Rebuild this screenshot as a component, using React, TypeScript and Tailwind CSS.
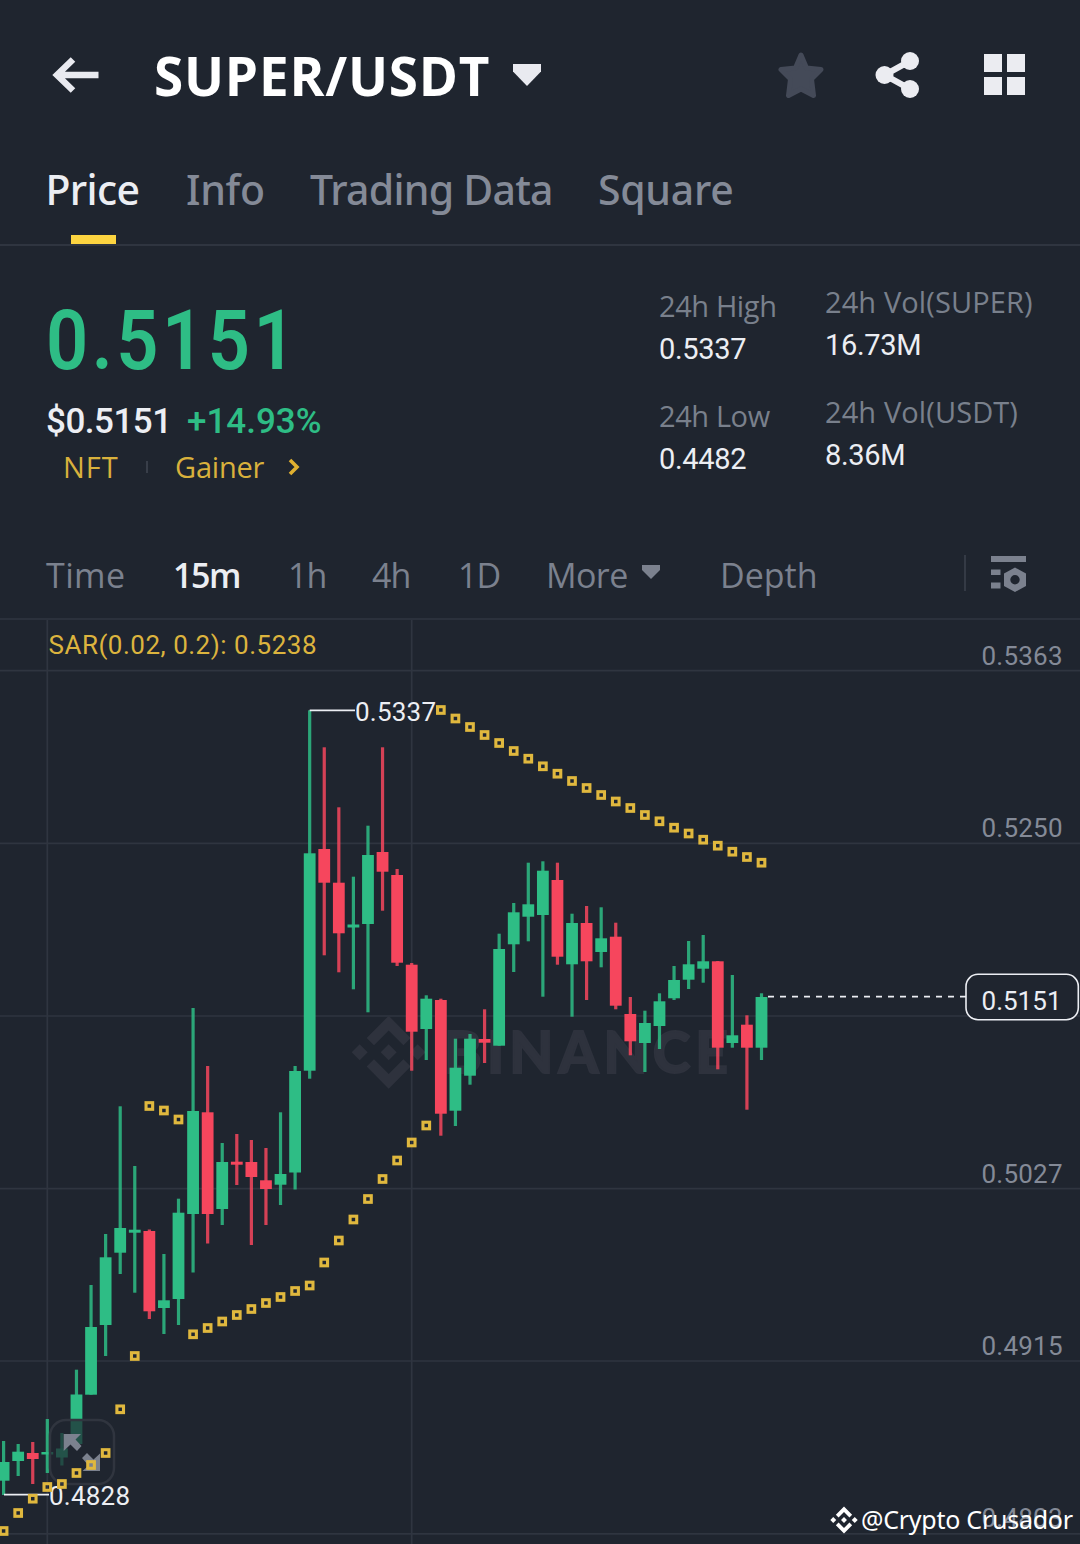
import { clsx } from "clsx";

type Candle = [high: number, top: number, bottom: number, low: number, up: 0 | 1];

// One entry per 15m bar, in chart units
const candles: Candle[] = [
  [1441, 1462, 1480.7, 1495, 1],
  [1444, 1451.7, 1461, 1476, 1],
  [1442, 1453, 1459, 1484, 0],
  [1419, 1452, 1454.5, 1473, 1],
  [1433, 1448.5, 1457.5, 1465.5, 1],
  [1369.7, 1394.5, 1444, 1444, 1],
  [1285, 1327, 1394.7, 1394.7, 1],
  [1234, 1257.3, 1325, 1356, 1],
  [1106.3, 1228, 1252.7, 1274, 1],
  [1166, 1229.7, 1232.7, 1292.7, 1],
  [1229.5, 1231, 1311.3, 1319, 0],
  [1254, 1300.3, 1308, 1334, 1],
  [1198.7, 1212.7, 1299, 1325, 1],
  [1008, 1111, 1214, 1272.5, 1],
  [1066, 1112.3, 1214, 1243.5, 0],
  [1143, 1162, 1209, 1225, 1],
  [1134, 1161.7, 1164.7, 1185, 0],
  [1140, 1162, 1177, 1245, 0],
  [1148, 1180.3, 1189, 1225, 0],
  [1112.3, 1174, 1184.7, 1205, 1],
  [1066, 1071, 1172.5, 1189.5, 1],
  [710.3, 853.3, 1070.7, 1078.7, 1],
  [747.3, 849, 882.7, 955.3, 0],
  [807.3, 882.7, 933.3, 972.3, 0],
  [876.7, 924.5, 927.5, 989.3, 1],
  [825.7, 855, 924, 1012.3, 1],
  [747.3, 852, 871.7, 910.7, 0],
  [869, 875, 962.7, 966, 0],
  [963, 964.7, 1031.7, 1070.7, 0],
  [995.3, 998.7, 1029, 1060, 1],
  [998.7, 1000, 1113.7, 1135.7, 0],
  [1038.7, 1067.7, 1110.7, 1126, 1],
  [1034, 1038.7, 1075.7, 1084.7, 1],
  [1009.3, 1039, 1042.7, 1063, 0],
  [933.7, 949, 1045.7, 1045.7, 1],
  [903, 912.3, 944.3, 972, 1],
  [862.7, 904.3, 916.7, 941.3, 1],
  [861.3, 870.7, 915, 996.7, 1],
  [862.7, 880, 956.7, 964.7, 0],
  [913.7, 923, 964.3, 1016.7, 1],
  [906, 923, 961.3, 1000, 0],
  [907.3, 938.3, 952, 967.3, 1],
  [922.7, 936.7, 1005.7, 1009.3, 0],
  [997, 1014, 1041.3, 1055.3, 0],
  [1010.7, 1023, 1043, 1072, 1],
  [993.3, 1001.3, 1026, 1049, 1],
  [966, 980, 998.3, 1000, 1],
  [941, 964.3, 979.7, 989, 1],
  [935, 961.3, 968.7, 982.7, 1],
  [961, 961.3, 1047.7, 1069.3, 0],
  [975, 1035.3, 1043, 1047.7, 1],
  [1015.3, 1024.7, 1047.7, 1109.7, 0],
  [993.3, 997, 1047.7, 1060, 1],
];

const sar = [
  1531, 1513, 1498.7, 1487, 1484, 1473, 1465, 1453, 1409.3, 1356, 1106, 1110.5,
  1119.5, 1334.3, 1328, 1321.5, 1315, 1309, 1303, 1297, 1291, 1285.5, 1262.5,
  1240.5, 1219.5, 1199, 1179, 1160.5, 1142.5, 1125.5, 710, 718.5, 727, 735, 743,
  751, 758.7, 766.3, 773.7, 781, 788, 795, 801.5, 808, 815, 821.3, 827.7, 833.5,
  839.7, 845.7, 851.7, 857, 862.7,
];

const axis = [
  { label: "0.5363", y: 665 },
  { label: "0.5250", y: 837 },
  { label: "0.5027", y: 1183 },
  { label: "0.4915", y: 1355 },
  { label: "0.4803", y: 1527 },
];

const barX = (i: number) => 3.6 + i * 14.575;

function BinanceMark() {
  return (
    <>
      <path d="M0-36.500 22-14.200 14.700-7 0-21.700-14.700-7-22-14.200Z" />
      <path d="M0 36.500 22 14.200 14.700 7 0 21.700-14.700 7-22 14.200Z" />
      <path d="M0-8 8 0 0 8-8 0Z" />
      <path d="M-29-8-21 0-29 8-37 0Z" />
      <path d="M29-8 37 0 29 8 21 0Z" />
    </>
  );
}

function Header() {
  return (
    <header className="flex h-[149px] items-center pr-[55px] pl-[52px]">
      <svg className="h-[40px] w-[48px]" viewBox="0 0 48 40" fill="none" stroke="#e9eaf0" strokeWidth="6.500">
        <path d="M5 20H46.500M21 4.500 5 20 21 35.500" />
      </svg>
      <h1 className="mt-[2px] ml-[54px] w-[359px] text-[53px] leading-none font-bold tracking-[0.8px] whitespace-nowrap text-white">
        SUPER/USDT
      </h1>
      <svg className="h-[22px] w-[28px]" viewBox="0 0 28 22" fill="#e9eaf0">
        <path d="M0 0H28V7.500L14 22 0 7.500Z" />
      </svg>
      <div className="ml-auto flex items-center">
        <svg className="h-[46px] w-[46px]" viewBox="0 0 46 46" fill="#444a58" stroke="#444a58" strokeWidth="5" strokeLinejoin="round">
          <path d="M23 3 28.500 16 43 17.500 33.500 27 35.500 43.500 23 37 10.500 43.500 12.500 27 3 17.500 17.500 16Z" />
        </svg>
        <svg className="ml-[51px] h-[46px] w-[46px]" viewBox="0 0 46 46" fill="#ebecf1" stroke="#ebecf1">
          <path d="M35 9 9.500 23 35 37" fill="none" strokeWidth="6" />
          <circle cx="9.500" cy="23" r="9" stroke="none" />
          <circle cx="35" cy="9" r="9" stroke="none" />
          <circle cx="35" cy="37" r="9" stroke="none" />
        </svg>
        <div className="ml-[63px] grid grid-cols-2 gap-[5px]">
          {[0, 1, 2, 3].map((n) => (
            <span key={n} className="size-[18px] bg-[#ebecf1]" />
          ))}
        </div>
      </div>
    </header>
  );
}

function Tabs() {
  return (
    <nav className="flex h-[97px] border-b-2 border-[#2f3540] pt-[20px] pl-[46px] font-['Noto_Sans',sans-serif] text-[41px] leading-none font-medium whitespace-nowrap text-[#848a97]">
      <div className="flex w-[95px] flex-col items-center text-[#eceef3]">
        <span className="-ml-[2px] tracking-[-0.6px]">Price</span>
        <span className="mt-[25px] h-[9px] w-[45px] bg-[#fcd440]" />
      </div>
      <span className="ml-[45px] w-[124px] tracking-[-0.3px]">Info</span>
      <span className="w-[288px] tracking-[-0.75px]">Trading Data</span>
      <span className="tracking-[-0.3px]">Square</span>
    </nav>
  );
}

function Stat({ label, value }: { label: string; value: string }) {
  return (
    <div className="h-[110px] whitespace-nowrap">
      <div className="text-[29px] leading-none text-[#79808c]">{label}</div>
      <div className="mt-[15px] font-['Roboto',sans-serif] text-[29px] leading-none tracking-[-0.3px] text-[#eceef3]">
        {value}
      </div>
    </div>
  );
}

function Summary() {
  return (
    <section className="flex h-[285px] pl-[46px]">
      <div className="w-[613px] pt-[53px]">
        <div className="origin-left scale-x-[0.880] font-['Roboto',sans-serif] text-[84px] leading-none font-semibold tracking-[4px] text-[#2ebd85]">
          0.5151
        </div>
        <div className="mt-[21px] flex font-['Roboto',sans-serif] text-[35px] leading-none font-medium">
          <span className="w-[141px] tracking-[-0.5px] text-[#eceef3]">$0.5151</span>
          <span className="text-[#2ebd85]">+14.93%</span>
        </div>
        <div className="mt-[13px] flex items-center pl-[17px] text-[29px] leading-none text-[#d9b13c]">
          <span className="w-[83px] tracking-[1px]">NFT</span>
          <span className="h-[12px] w-[2px] bg-[#383e49]" />
          <span className="ml-[27px] w-[113px] tracking-[-0.2px]">Gainer</span>
          <svg className="h-[18px] w-[12px]" viewBox="0 0 12 18" fill="none" stroke="#e0b030" strokeWidth="3.600">
            <path d="M2 2 9 9 2 16" />
          </svg>
        </div>
      </div>
      <div className="w-[166px] pt-[45px] tracking-[-0.4px]">
        <Stat label="24h High" value="0.5337" />
        <Stat label="24h Low" value="0.4482" />
      </div>
      <div className="pt-[41px] tracking-[0.1px]">
        <Stat label="24h Vol(SUPER)" value="16.73M" />
        <Stat label="24h Vol(USDT)" value="8.36M" />
      </div>
    </section>
  );
}

const intervals = [
  { label: "Time", width: "w-[127px] tracking-[0.4px]" },
  { label: "15m", width: "w-[115px] tracking-[-1.5px]", active: true },
  { label: "1h", width: "w-[84px] tracking-[-1px]" },
  { label: "4h", width: "w-[86px] tracking-[-1px]" },
  { label: "1D", width: "w-[88px] tracking-[-1px]" },
];

function IntervalBar() {
  return (
    <div className="flex h-[89px] items-center border-b-2 border-[#2b313c] pl-[46px] text-[34px] leading-none whitespace-nowrap text-[#7b818e]">
      {intervals.map(({ label, width, active }) => (
        <span key={label} className={clsx(width, active && "font-semibold text-[#eceef3]")}>
          {label}
        </span>
      ))}
      <span className="w-[96px] tracking-[-0.6px]">More</span>
      <svg className="mb-[5px] h-[14px] w-[18px]" viewBox="0 0 18 14" fill="#7b818e">
        <path d="M0 0H18V5L9 14 0 5Z" />
      </svg>
      <span className="ml-[60px]">Depth</span>
      <span className="mr-[25px] mb-[3px] ml-auto h-[36px] w-[2px] bg-[#343a45]" />
      <svg className="mr-[53px] mb-[2px] h-[36px] w-[36px]" viewBox="0 0 36 36" fill="#7b818e">
        <path d="M0 0H35V6H0ZM0 13.500H9.500V19H0ZM0 26.500H9.500V32.500H0Z" />
        <path fillRule="evenodd" d="M24 11.500 35 17.500V30L24 36 13 30V17.500ZM24 19A4.700 4.700 0 1 0 24 28.400 4.700 4.700 0 1 0 24 19Z" />
      </svg>
    </div>
  );
}

function Chart() {
  return (
    <svg className="block h-[924px] w-[1080px] font-['Roboto',sans-serif]" viewBox="0 620 1080 924" fontSize="26">
      <g stroke="#2f3540" strokeWidth="1.700">
        {[670.7, 843.3, 1016, 1188.6, 1361, 1533.8].map((y) => (
          <path key={y} d={`M0 ${y}H1080`} />
        ))}
        <path d="M47.300 620V1544M411.700 620V1544" />
      </g>

      <g fill="#2e323d">
        <g transform="translate(388.700 1052.300)">
          <BinanceMark />
        </g>
        <text
          x="444"
          y="1073"
          textLength="284"
          stroke="#2e323d"
          strokeWidth="1.800"
          className="font-['Lato',sans-serif] text-[57px] font-black"
        >
          BINANCE
        </text>
      </g>

      <g fill="#848a97">
        {axis.map(({ label, y }) => (
          <text key={label} x="981.500" y={y} textLength="81">
            {label}
          </text>
        ))}
      </g>

      {candles.map(([high, top, bottom, low, up], i) => (
        <g key={i} fill={up ? "#2ebd85" : "#f6465d"}>
          <rect x={barX(i) - 1.6} y={high} width="3.200" height={low - high} opacity="0.850" />
          <rect x={barX(i) - 5.9} y={top} width="11.800" height={bottom - top} />
        </g>
      ))}

      <path d="M768 996.700H966" stroke="#eceef3" strokeWidth="1.800" strokeDasharray="6 6" />
      <rect x="966" y="974.300" width="112.300" height="45.500" rx="12" fill="#1f252f" stroke="#eceef3" strokeWidth="1.600" />
      <path d="M309.700 710.300H355M4 1494.700H49" stroke="#eceef3" strokeWidth="1.700" />
      <g fill="#eceef3">
        <text x="981.500" y="1010" textLength="80">0.5151</text>
        <text x="355" y="721" textLength="81">0.5337</text>
        <text x="49" y="1505" textLength="81">0.4828</text>
      </g>
      <text x="48.500" y="654" textLength="268" fill="#dcb43e">
        SAR(0.02, 0.2): 0.5238
      </text>

      {/* fullscreen toggle */}
      <rect x="50" y="1420" width="64" height="64" rx="16" fill="#1f252f" fillOpacity="0.700" stroke="#30353f" strokeWidth="2.500" />
      <g fill="#7b818e">
        <path d="M63.700 1434H81L75.500 1439.500 81.500 1446 77 1451 70.500 1444.500 63.700 1451Z" />
        <path d="M100 1471H82.500L88.500 1465.500 82 1458 87 1453 93.500 1459.500 100 1453.500Z" />
      </g>

      <g fill="none" stroke="#e0b83e" strokeWidth="3.100">
        {sar.map((y, i) => (
          <rect key={i} x={barX(i) - 3.3} y={y - 3.3} width="6.600" height="6.600" />
        ))}
      </g>

      <g fill="#fff">
        <g transform="translate(844 1520) scale(0.370)">
          <BinanceMark />
        </g>
        <text x="861" y="1529" textLength="212" className="font-['Noto_Sans',sans-serif] text-[25px]">
          @Crypto Crusador
        </text>
      </g>
    </svg>
  );
}

export default function App() {
  return (
    <main className="h-[1544px] w-[1080px] overflow-hidden bg-[#1f252f] font-['Open_Sans',sans-serif]">
      <Header />
      <Tabs />
      <Summary />
      <IntervalBar />
      <Chart />
    </main>
  );
}
